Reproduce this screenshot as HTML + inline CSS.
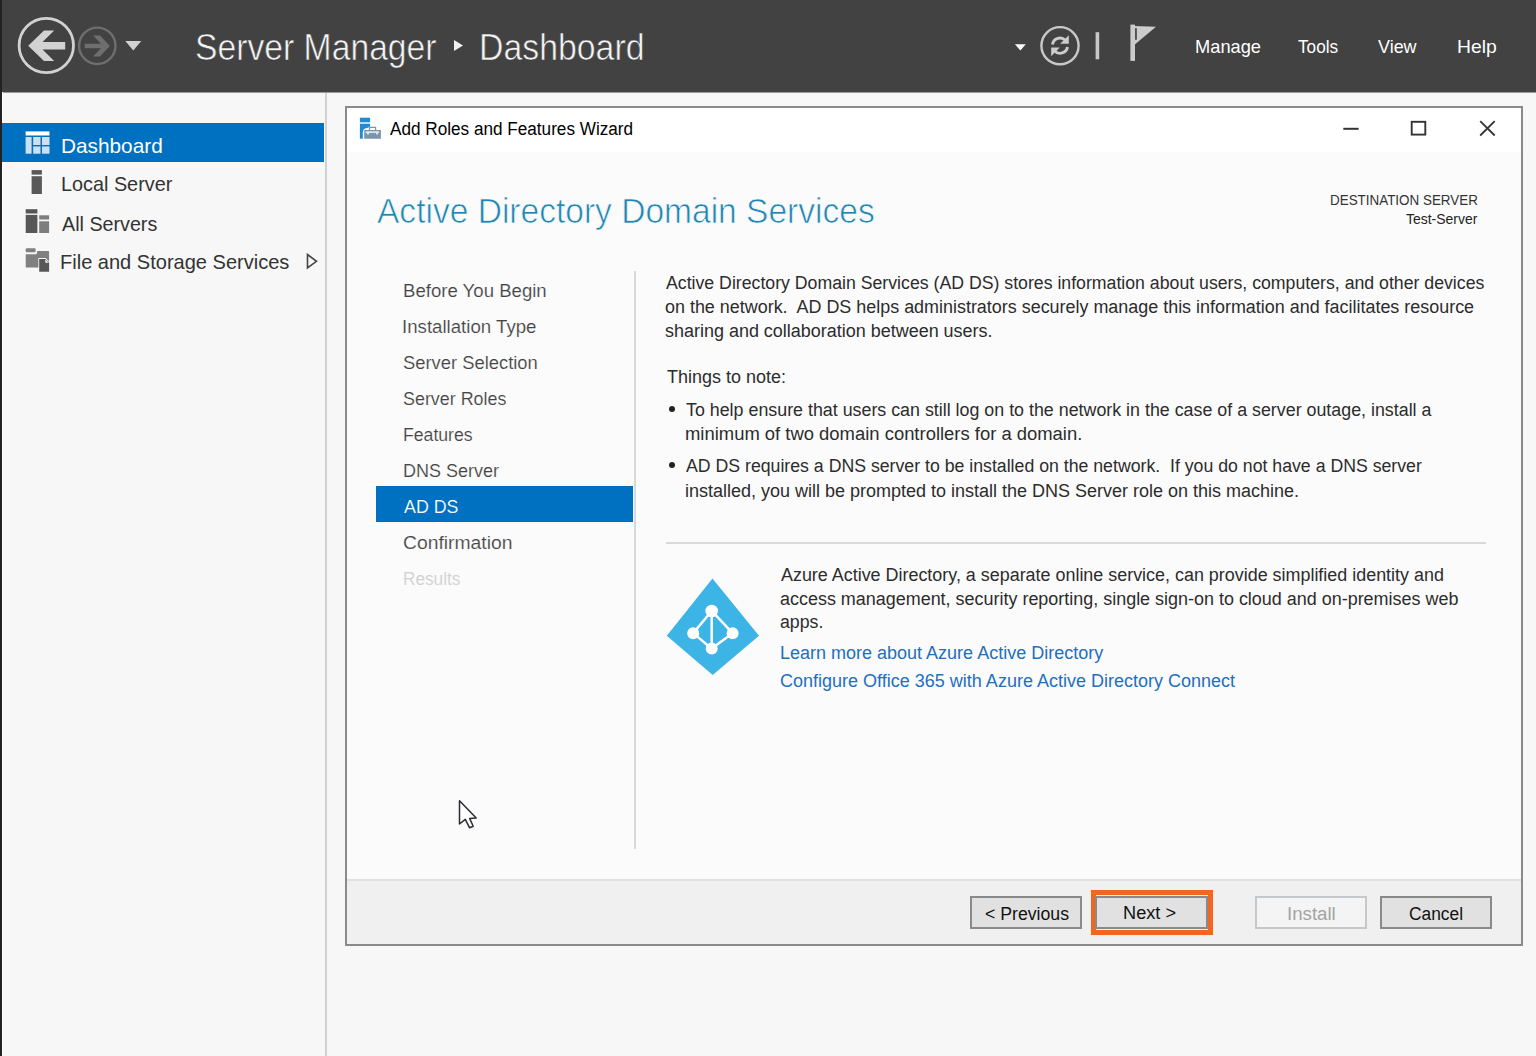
<!DOCTYPE html>
<html><head><meta charset="utf-8"><title>Server Manager</title>
<style>
html,body{margin:0;padding:0;}
body{width:1536px;height:1056px;position:relative;overflow:hidden;background:#f7f7f7;font-family:"Liberation Sans",sans-serif;}
.t{position:absolute;white-space:pre;line-height:1;transform-origin:0 0;}
.r{position:absolute;box-sizing:border-box;}
</style></head><body>
<!-- left dark strip -->
<div class="r" style="left:0;top:0;width:2px;height:1056px;background:#222;"></div>
<div class="r" style="left:2px;top:92px;width:1px;height:964px;background:#fdfdfd;"></div>
<!-- header -->
<div class="r" style="left:2px;top:0;width:1534px;height:92px;background:#424242;"></div>
<div class="r" style="left:3px;top:92px;width:1533px;height:1px;background:#9a9a9a;"></div>
<!-- sidebar separator -->
<div class="r" style="left:325px;top:93px;width:2px;height:963px;background:#d2d2d2;"></div>
<!-- sidebar highlight -->
<div class="r" style="left:2px;top:123px;width:322px;height:39px;background:#0070c0;"></div>
<!-- header icons -->
<svg style="position:absolute;left:0;top:0" width="1536" height="92">
  <circle cx="46.3" cy="45.5" r="27.2" fill="none" stroke="#d2d2d2" stroke-width="2.8"/>
  <path d="M28.2 45.8 L44 30.5 L54.2 30.5 L42.5 42 L65.2 42 L65.2 49.5 L42.5 49.5 L54.2 61 L44 61 Z" fill="#d2d2d2"/>
  <circle cx="97.3" cy="45.8" r="18.2" fill="none" stroke="#6e6e6e" stroke-width="2.4"/>
  <path d="M109.8 46 L100 35.5 L93 35.5 L101 43.7 L84.7 43.7 L84.7 48.3 L101 48.3 L93 56.5 L100 56.5 Z" fill="#6e6e6e"/>
  <path d="M125.3 41 L141.3 41 L133.3 50.6 Z" fill="#d2d2d2"/>
  <path d="M454 40 L463 45.5 L454 51 Z" fill="#f0f0f0"/>
  <path d="M1014.9 44.2 L1025.8 44.2 L1020.35 50.4 Z" fill="#ffffff"/>
  <circle cx="1060" cy="45.7" r="18.6" fill="none" stroke="#c8c8c8" stroke-width="2.4"/>
  <path d="M1052.52 44.38 A7.6 7.6 0 0 1 1065.37 40.33" fill="none" stroke="#cccccc" stroke-width="2.9"/>
  <path d="M1068.8 35.2 L1068.8 43.8 L1060.2 43.8 Z" fill="#cccccc"/>
  <path d="M1067.48 47.02 A7.6 7.6 0 0 1 1054.63 51.07" fill="none" stroke="#cccccc" stroke-width="2.9"/>
  <path d="M1051.2 56.2 L1051.2 47.6 L1059.8 47.6 Z" fill="#cccccc"/>
  <rect x="1095.6" y="32.2" width="3.6" height="27.1" fill="#c8c8c8"/>
  <rect x="1130.4" y="24.6" width="4.6" height="36.3" fill="#cccccc"/>
  <path d="M1134.5 26 L1156 26.8 L1134.5 44.8 Z" fill="#cccccc"/>
  <rect x="1135.1" y="28.2" width="1.7" height="11.6" fill="#424242"/>
</svg>
<!-- sidebar icons -->
<svg style="position:absolute;left:0;top:100px" width="330" height="200" viewBox="0 100 330 200">
  <rect x="25.6" y="131.4" width="23.9" height="4.1" fill="#ffffff"/>
  <rect x="25.6" y="137" width="6" height="16.7" fill="#cde0ef"/>
  <rect x="33.2" y="137" width="7.3" height="8" fill="#cde0ef"/>
  <rect x="42" y="137" width="7.5" height="8" fill="#cde0ef"/>
  <rect x="33.2" y="146.4" width="7.3" height="7.3" fill="#cde0ef"/>
  <rect x="42" y="146.4" width="7.5" height="7.3" fill="#cde0ef"/>
  <rect x="31.6" y="170.1" width="10.3" height="4.5" fill="#595959"/>
  <rect x="31.6" y="176.2" width="10.3" height="17.8" fill="#595959"/>
  <rect x="25.7" y="209.2" width="11.7" height="4.3" fill="#575757"/>
  <rect x="25.7" y="214.9" width="11.7" height="18.1" fill="#575757"/>
  <rect x="39.2" y="215.3" width="9.9" height="4.2" fill="#7d7d7d"/>
  <rect x="39.2" y="221.3" width="9.9" height="11.7" fill="#7d7d7d"/>
  <rect x="25.7" y="248.3" width="9.9" height="3.9" rx="1" fill="#808080"/>
  <path d="M25.7 254.3 L36.5 254.3 L37.4 251.1 L48.1 251.1 Q49.1 251.1 49.1 252.1 L49.1 267.4 L25.7 267.4 Z" fill="#808080"/>
  <path d="M38.4 258.1 L45.6 258.1 L49.9 262.4 L49.9 272.5 L38.4 272.5 Z" fill="#f7f7f7"/>
  <path d="M39.2 258.9 L45.3 258.9 L49.1 262.7 L49.1 271.7 L39.2 271.7 Z" fill="#575757"/>
  <path d="M45.3 259.5 L45.3 262.7 L48.5 262.7 Z" fill="#f7f7f7"/>
  <path d="M307.5 254.5 L316.5 261.3 L307.5 268 Z" fill="none" stroke="#444" stroke-width="1.6"/>
</svg>
<!-- dialog -->
<div class="r" style="left:345px;top:106px;width:1178px;height:840px;border:2px solid #8a8a8a;background:#fbfbfb;"></div>
<div class="r" style="left:347px;top:108px;width:1174px;height:44px;background:#ffffff;"></div>
<div class="r" style="left:347px;top:879px;width:1174px;height:65px;background:#f0f0f0;border-top:2px solid #e0e0e0;"></div>
<!-- wizard icon -->
<svg style="position:absolute;left:355px;top:114px" width="30" height="30" viewBox="355 114 30 30">
  <rect x="359.9" y="122" width="10.2" height="2" fill="#bcdcf2"/>
  <rect x="359.9" y="117.7" width="10.2" height="4.3" fill="#1e8bd8"/>
  <path d="M359.9 124 L370.1 124 L370.1 126.2 Q369 127.5 366 128.2 Q363 129 362.8 132 L362.8 138.8 L359.9 138.8 Z" fill="#1e8bd8"/>
  <path d="M364.2 129.9 L368.9 129.9 L368.9 126.7 L376.2 126.7 L376.2 129.9 L380.9 129.9 L380.9 138.8 L364.2 138.8 Z M370.1 128 L370.1 129.9 L375 129.9 L375 128 Z" fill="#7a96ab" fill-rule="evenodd"/>
  <path d="M365.6 131.2 L379.1 131.2 L379.1 133.1 L378.3 133.1 L377.8 134.4 L376.3 134.4 L375.8 133.1 L369.2 133.1 L368.7 134.4 L367.2 134.4 L366.7 133.1 L365.6 133.1 Z" fill="#dde6ed"/>
</svg>
<!-- window controls -->
<svg style="position:absolute;left:1330px;top:110px" width="180" height="40" viewBox="1330 110 180 40">
  <rect x="1343.3" y="127.8" width="15.3" height="2" fill="#333"/>
  <rect x="1411.7" y="121.8" width="13.6" height="12.8" fill="none" stroke="#333" stroke-width="1.9"/>
  <path d="M1480.2 121.2 L1494.7 135.5 M1494.7 121.2 L1480.2 135.5" stroke="#333" stroke-width="1.8"/>
</svg>
<!-- nav highlight -->
<div class="r" style="left:376px;top:486px;width:257px;height:36px;background:#0070c0;"></div>
<!-- vertical separator -->
<div class="r" style="left:634px;top:271px;width:2px;height:578px;background:#d9d9d9;"></div>
<!-- bullets -->
<div class="r" style="left:669px;top:406px;width:6px;height:6px;border-radius:50%;background:#222;"></div>
<div class="r" style="left:669px;top:462px;width:6px;height:6px;border-radius:50%;background:#222;"></div>
<!-- separator -->
<div class="r" style="left:666px;top:542px;width:820px;height:2px;background:#d9d9d9;"></div>
<!-- azure icon -->
<svg style="position:absolute;left:660px;top:570px" width="110" height="115" viewBox="660 570 110 115">
  <path d="M712.5 578.5 L759 635.7 L712.7 675 L666.8 635.7 Z" fill="#3cb4e6"/>
  <path d="M711.7 611 L693.2 633.2 L711.7 648.6 L732.6 633.2 Z M711.7 611 L711.7 648.6" fill="none" stroke="#fff" stroke-width="2.5"/>
  <circle cx="711.7" cy="611" r="6.3" fill="#fff"/>
  <circle cx="693.2" cy="633.2" r="6" fill="#fff"/>
  <circle cx="732.6" cy="633.2" r="6" fill="#fff"/>
  <circle cx="711.7" cy="648.6" r="6" fill="#fff"/>
</svg>
<!-- buttons -->
<div class="r" style="left:970px;top:896px;width:112px;height:33px;border:2px solid #8a8a8a;background:#e1e1e1;"></div>
<div class="r" style="left:1090.5px;top:890px;width:122px;height:44.5px;border:5px solid #f26522;"></div>
<div class="r" style="left:1095px;top:895.5px;width:112.5px;height:33.5px;border:2px solid #8a8a8a;background:#e1e1e1;"></div>
<div class="r" style="left:1255px;top:896px;width:112px;height:33px;border:2px solid #c5c9cc;background:#f4f4f4;"></div>
<div class="r" style="left:1379.5px;top:896px;width:112px;height:33px;border:2px solid #8a8a8a;background:#e1e1e1;"></div>
<!-- cursor -->
<svg style="position:absolute;left:455px;top:796px" width="30" height="36" viewBox="455 796 30 36">
  <path d="M459.5 800.8 L459.5 824 L465.3 819.4 L469.6 827.8 L473.2 826.2 L469.6 818.4 L476.2 818.1 Z" fill="#fff" stroke="#2b2b33" stroke-width="1.5" stroke-linejoin="round"/>
</svg>

<div class="t" style="left:195.18px;top:29.28px;font-size:37.00px;color:#f4f4f4;transform:scaleX(0.9106);-webkit-text-stroke:0.6px #424242;">Server Manager</div>
<div class="t" style="left:478.86px;top:29.28px;font-size:37.00px;color:#f4f4f4;transform:scaleX(0.9142);-webkit-text-stroke:0.6px #424242;">Dashboard</div>
<div class="t" style="left:1194.51px;top:37.64px;font-size:18.50px;color:#ffffff;transform:scaleX(0.9877);">Manage</div>
<div class="t" style="left:1298.40px;top:37.64px;font-size:18.50px;color:#ffffff;transform:scaleX(0.9279);">Tools</div>
<div class="t" style="left:1378.00px;top:37.64px;font-size:18.50px;color:#ffffff;transform:scaleX(0.9700);">View</div>
<div class="t" style="left:1456.76px;top:37.64px;font-size:18.50px;color:#ffffff;transform:scaleX(1.0444);">Help</div>
<div class="t" style="left:60.82px;top:134.72px;font-size:21.00px;color:#ffffff;transform:scaleX(0.9900);">Dashboard</div>
<div class="t" style="left:60.91px;top:173.42px;font-size:21.00px;color:#333333;transform:scaleX(0.9440);">Local Server</div>
<div class="t" style="left:62.40px;top:212.52px;font-size:21.00px;color:#333333;transform:scaleX(0.9386);">All Servers</div>
<div class="t" style="left:60.49px;top:250.82px;font-size:21.00px;color:#333333;transform:scaleX(0.9538);">File and Storage Services</div>
<div class="t" style="left:390.00px;top:120.26px;font-size:18.00px;color:#000000;transform:scaleX(0.9528);">Add Roles and Features Wizard</div>
<div class="t" style="left:377.40px;top:193.95px;font-size:35.50px;color:#1e86b2;transform:scaleX(0.9449);-webkit-text-stroke:0.7px #fafafa;">Active Directory Domain Services</div>
<div class="t" style="left:1330.07px;top:192.63px;font-size:14.50px;color:#333333;transform:scaleX(0.9253);">DESTINATION SERVER</div>
<div class="t" style="left:1405.80px;top:212.03px;font-size:14.50px;color:#222222;transform:scaleX(0.9622);">Test-Server</div>
<div class="t" style="left:402.97px;top:282.16px;font-size:18.00px;color:#444444;transform:scaleX(1.0328);-webkit-text-stroke:0.15px #fafafa;">Before You Begin</div>
<div class="t" style="left:401.93px;top:318.16px;font-size:18.00px;color:#444444;transform:scaleX(1.0362);-webkit-text-stroke:0.15px #fafafa;">Installation Type</div>
<div class="t" style="left:402.98px;top:354.16px;font-size:18.00px;color:#444444;transform:scaleX(1.0208);-webkit-text-stroke:0.15px #fafafa;">Server Selection</div>
<div class="t" style="left:403.01px;top:390.16px;font-size:18.00px;color:#444444;transform:scaleX(0.9942);-webkit-text-stroke:0.15px #fafafa;">Server Roles</div>
<div class="t" style="left:403.02px;top:426.16px;font-size:18.00px;color:#444444;transform:scaleX(0.9800);-webkit-text-stroke:0.15px #fafafa;">Features</div>
<div class="t" style="left:403.00px;top:462.16px;font-size:18.00px;color:#444444;transform:scaleX(1.0000);-webkit-text-stroke:0.15px #fafafa;">DNS Server</div>
<div class="t" style="left:404.00px;top:498.16px;font-size:18.00px;color:#ffffff;transform:scaleX(0.9907);-webkit-text-stroke:0.15px #0070c0;">AD DS</div>
<div class="t" style="left:402.93px;top:534.16px;font-size:18.00px;color:#444444;transform:scaleX(1.0730);-webkit-text-stroke:0.15px #fafafa;">Confirmation</div>
<div class="t" style="left:403.04px;top:570.16px;font-size:18.00px;color:#d0d0d0;transform:scaleX(0.9559);-webkit-text-stroke:0.15px #fafafa;">Results</div>
<div class="t" style="left:666.00px;top:273.56px;font-size:18.00px;color:#2c2c2c;transform:scaleX(0.9832);">Active Directory Domain Services (AD DS) stores information about users, computers, and other devices</div>
<div class="t" style="left:665.00px;top:297.56px;font-size:18.00px;color:#2c2c2c;transform:scaleX(0.9959);">on the network.  AD DS helps administrators securely manage this information and facilitates resource</div>
<div class="t" style="left:665.00px;top:321.56px;font-size:18.00px;color:#2c2c2c;transform:scaleX(0.9979);">sharing and collaboration between users.</div>
<div class="t" style="left:667.00px;top:367.96px;font-size:18.00px;color:#2c2c2c;transform:scaleX(0.9983);">Things to note:</div>
<div class="t" style="left:686.00px;top:400.66px;font-size:18.00px;color:#2c2c2c;transform:scaleX(0.9907);">To help ensure that users can still log on to the network in the case of a server outage, install a</div>
<div class="t" style="left:684.98px;top:424.76px;font-size:18.00px;color:#2c2c2c;transform:scaleX(1.0236);">minimum of two domain controllers for a domain.</div>
<div class="t" style="left:686.00px;top:457.46px;font-size:18.00px;color:#2c2c2c;transform:scaleX(0.9833);">AD DS requires a DNS server to be installed on the network.  If you do not have a DNS server</div>
<div class="t" style="left:685.00px;top:481.66px;font-size:18.00px;color:#2c2c2c;transform:scaleX(0.9997);">installed, you will be prompted to install the DNS Server role on this machine.</div>
<div class="t" style="left:781.00px;top:565.56px;font-size:18.00px;color:#2c2c2c;transform:scaleX(0.9953);">Azure Active Directory, a separate online service, can provide simplified identity and</div>
<div class="t" style="left:780.00px;top:589.76px;font-size:18.00px;color:#2c2c2c;transform:scaleX(0.9971);">access management, security reporting, single sign-on to cloud and on-premises web</div>
<div class="t" style="left:780.02px;top:613.16px;font-size:18.00px;color:#2c2c2c;transform:scaleX(0.9833);">apps.</div>
<div class="t" style="left:780.00px;top:643.66px;font-size:18.00px;color:#1f6fbf;transform:scaleX(1.0000);">Learn more about Azure Active Directory</div>
<div class="t" style="left:780.00px;top:672.26px;font-size:18.00px;color:#1f6fbf;transform:scaleX(1.0004);">Configure Office 365 with Azure Active Directory Connect</div>
<div class="t" style="left:985.02px;top:904.66px;font-size:18.00px;color:#111111;transform:scaleX(0.9821);">&lt; Previous</div>
<div class="t" style="left:1123.19px;top:904.46px;font-size:18.00px;color:#111111;transform:scaleX(1.0098);">Next &gt;</div>
<div class="t" style="left:1286.63px;top:904.86px;font-size:18.00px;color:#a3a3a3;transform:scaleX(1.0364);">Install</div>
<div class="t" style="left:1408.54px;top:904.86px;font-size:18.00px;color:#111111;transform:scaleX(0.9648);">Cancel</div>
</body></html>
